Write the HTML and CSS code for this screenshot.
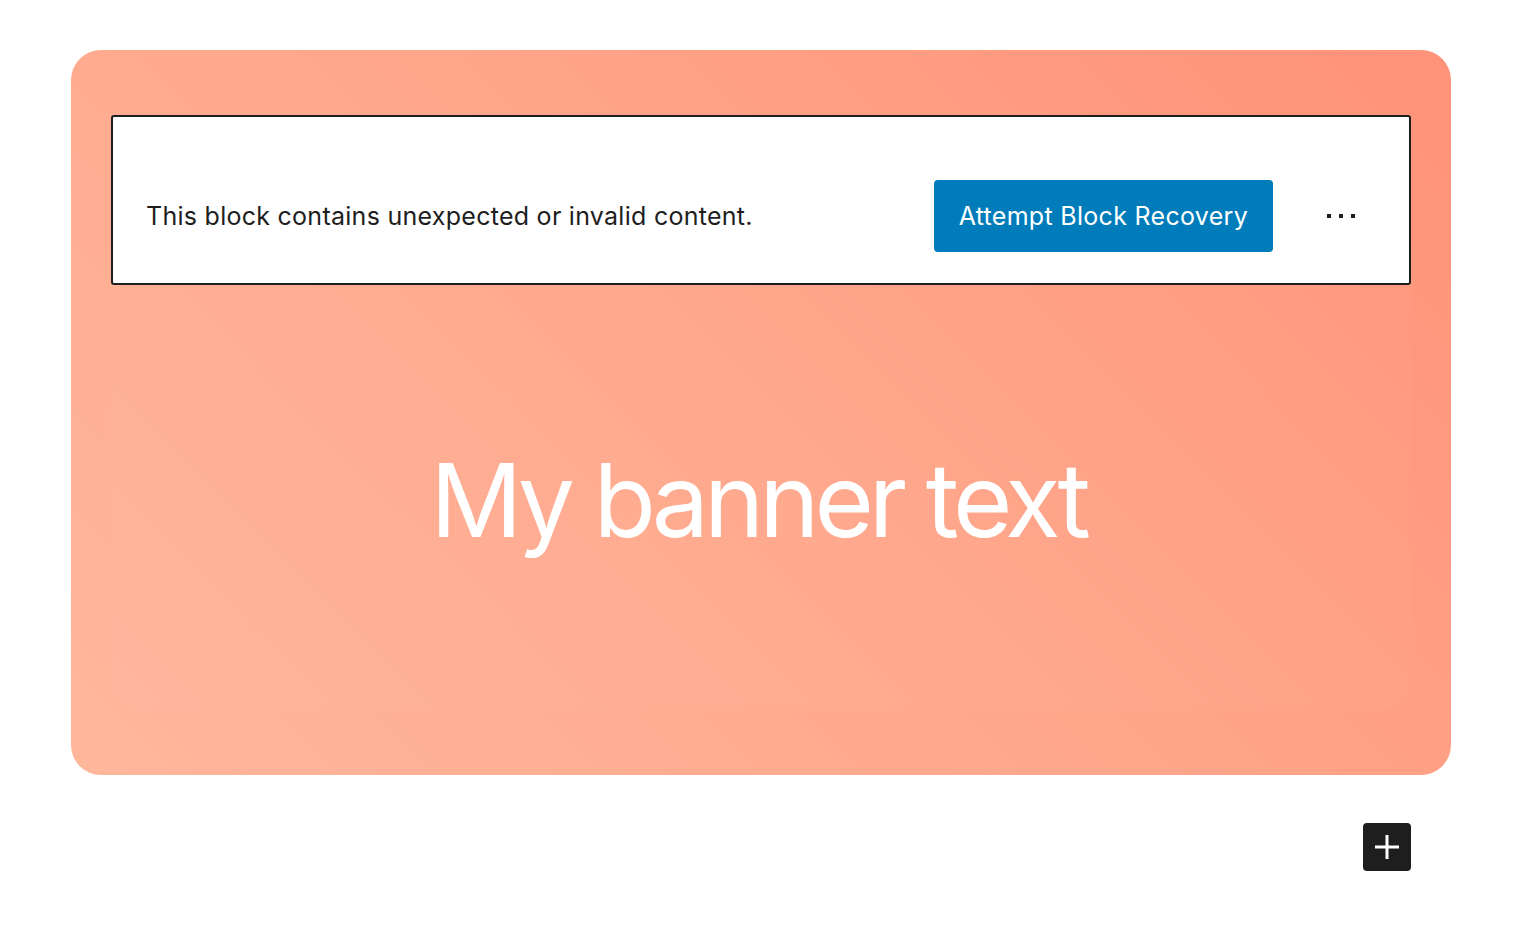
FILE: index.html
```html
<!DOCTYPE html>
<html lang="en">
<head>
<meta charset="utf-8">
<title>Banner</title>
<link rel="stylesheet" href="styles.css">
</head>
<body>
<div class="page">
  <div class="cover">
    <div class="cover-inner">
      <div class="warning">
        <p class="warning-text">This block contains unexpected or invalid content.</p>
        <div class="warning-actions">
          <button class="btn-primary" type="button">Attempt Block Recovery</button>
          <button class="btn-more" type="button" aria-label="More options">
            <svg width="30" height="6" viewBox="0 0 30 6"><rect x="1" y="1" width="4" height="4" fill="#1e1e1e"/><rect x="13" y="1" width="4" height="4" fill="#1e1e1e"/><rect x="25" y="1" width="4" height="4" fill="#1e1e1e"/></svg>
          </button>
        </div>
      </div>
      <div class="cover-content">
        <p class="banner-text">My banner text</p>
      </div>
    </div>
  </div>
  <div class="appender">
    <button class="btn-add" type="button" aria-label="Add block">
      <svg width="48" height="48" viewBox="0 0 48 48"><path d="M24 12v24M12 24h24" stroke="#fff" stroke-width="3" fill="none"/></svg>
    </button>
  </div>
</div>
</body>
</html>
```

FILE: styles.css
```css
html, body {
  margin: 0;
  padding: 0;
  background: #fff;
}

.page {
  padding: 50px 83px 0 71px;
  font-family: Inter, "Noto Sans", sans-serif;
}

.cover {
  width: 1380px;
  height: 725px;
  box-sizing: border-box;
  border-radius: 30px;
  background: linear-gradient(45deg, #ffb79c 0%, #ffa68b 50%, #ff9278 100%);
  padding: 65px 40px;
}

.cover-inner {
  height: 100%;
  display: flex;
  flex-direction: column;
  border-radius: 0 0 30px 30px;
  background: rgba(255, 255, 255, 0.025);
}

.warning {
  height: 170px;
  box-sizing: border-box;
  background: #fff;
  border: 2px solid #1e1e1e;
  border-radius: 3px;
  padding: 63px 44px 31px 33px;
  display: flex;
  align-items: center;
  justify-content: space-between;
}

.warning-text {
  margin: 0;
  font-size: 25px;
  color: #1e1e1e;
  letter-spacing: 0.27px;
}

.warning-actions {
  display: flex;
  align-items: center;
  gap: 44px;
}

.btn-primary {
  height: 72px;
  padding: 0 25px;
  border: none;
  border-radius: 4px;
  background: #007cba;
  color: #fff;
  font-family: Inter, "Noto Sans", sans-serif;
  font-size: 25px;
  letter-spacing: 0.3px;
}

.btn-more {
  width: 48px;
  height: 72px;
  border: none;
  background: transparent;
  padding: 0;
  display: flex;
  align-items: center;
  justify-content: center;
}

.cover-content {
  flex: 1;
  display: flex;
  align-items: center;
  justify-content: center;
  padding-top: 5px;
}

.banner-text {
  margin: 0 6px 0 0;
  color: #fff;
  font-size: 102px;
  letter-spacing: -5.1px;
  line-height: 1.2;
}

.appender {
  width: 1340px;
  display: flex;
  justify-content: flex-end;
  padding-top: 48px;
}

.btn-add {
  width: 48px;
  height: 48px;
  padding: 0;
  border: none;
  border-radius: 4px;
  background: #1e1e1e;
  display: block;
}

.btn-add svg {
  display: block;
}
```
